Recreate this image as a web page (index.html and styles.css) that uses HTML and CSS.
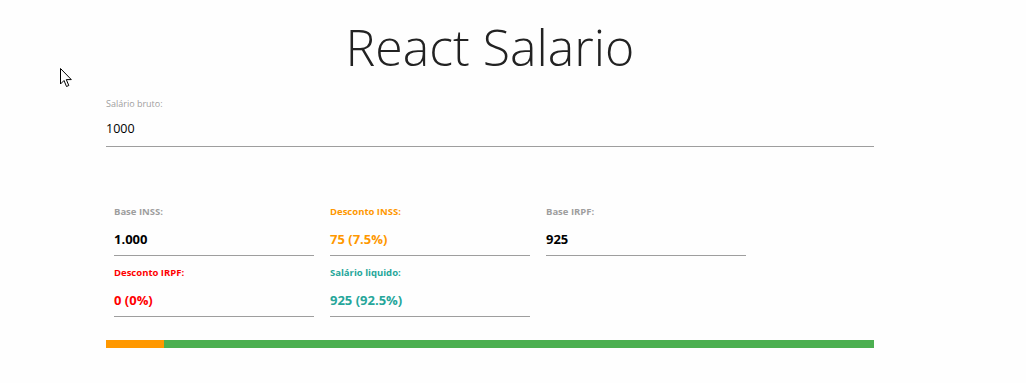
FILE: index.html
```html
<!DOCTYPE html>
<html lang="en">
<head>
    <meta charset="UTF-8">
    <meta name="viewport" content="width=device-width, initial-scale=1.0">
    <title>React Salario</title>
    <link rel="stylesheet" href="styles.css">
</head>
<body>
    <svg class="cursor" width="13" height="20" viewBox="0 0 13 20">
        <path d="M0.5 0.5 L0.5 16 L4 12.5 L6.5 18.5 L8.8 17.5 L6.3 11.6 L11.3 11.6 Z" fill="#fff" stroke="#000" stroke-width="1" stroke-linejoin="round"/>
    </svg>

    <div class="container">
        <h1 class="title">React Salario</h1>

        <div class="input-field">
            <label for="salary">Salário bruto:</label>
            <input type="text" id="salary" value="1000">
        </div>

        <div class="results">
            <div class="result">
                <label>Base INSS:</label>
                <div class="value">1.000</div>
            </div>
            <div class="result orange">
                <label>Desconto INSS:</label>
                <div class="value">75 (7.5%)</div>
            </div>
            <div class="result">
                <label>Base IRPF:</label>
                <div class="value">925</div>
            </div>
            <div class="result red">
                <label>Desconto IRPF:</label>
                <div class="value">0 (0%)</div>
            </div>
            <div class="result teal">
                <label>Salário liquido:</label>
                <div class="value">925 (92.5%)</div>
            </div>
        </div>

        <div class="bar">
            <div class="bar-part inss" style="width: 7.5%"></div>
            <div class="bar-part irpf" style="width: 0%"></div>
            <div class="bar-part net" style="width: 92.5%"></div>
        </div>
    </div>
</body>
</html>
```

FILE: styles.css
```css
:root {
    --gray: #9e9e9e;
    --orange: #ff9800;
    --red: #ff0000;
    --teal: #26a69a;
    --green: #4caf50;
}

* {
    margin: 0;
    padding: 0;
    box-sizing: border-box;
    font-family: 'Open Sans', 'Noto Sans', sans-serif;
}

body {
    background: #fefefe;
    color: #222;
}

.cursor {
    position: absolute;
    left: 60px;
    top: 68px;
}

.container {
    width: 768px;
    margin-left: 106px;
}

.title {
    font-size: 50px;
    font-weight: 300;
    line-height: 60px;
    text-align: center;
    margin-top: 17px;
    color: #222;
}

.input-field {
    margin-top: 20px;
}

.input-field label {
    display: block;
    font-size: 9px;
    line-height: 14px;
    color: var(--gray);
}

.input-field input {
    display: block;
    width: 100%;
    height: 36px;
    border: none;
    border-bottom: 1px solid var(--gray);
    background: transparent;
    font-size: 12.5px;
    color: #000;
    outline: none;
}

.results {
    display: grid;
    grid-template-columns: repeat(3, 200px);
    column-gap: 16px;
    row-gap: 10px;
    padding: 0 8px;
    margin-top: 58px;
}

.result label {
    display: block;
    font-size: 9.5px;
    font-weight: 700;
    line-height: 14px;
    color: var(--gray);
}

.result .value {
    font-size: 13px;
    font-weight: 700;
    line-height: 20px;
    padding: 10px 0 6px;
    color: #000;
    border-bottom: 1px solid var(--gray);
}

.result.orange label,
.result.orange .value {
    color: var(--orange);
}

.result.red label,
.result.red .value {
    color: var(--red);
}

.result.teal label,
.result.teal .value {
    color: var(--teal);
}

.bar {
    display: flex;
    height: 8px;
    margin-top: 23px;
}

.inss {
    background: var(--orange);
}

.irpf {
    background: var(--red);
}

.net {
    background: var(--green);
}
```
